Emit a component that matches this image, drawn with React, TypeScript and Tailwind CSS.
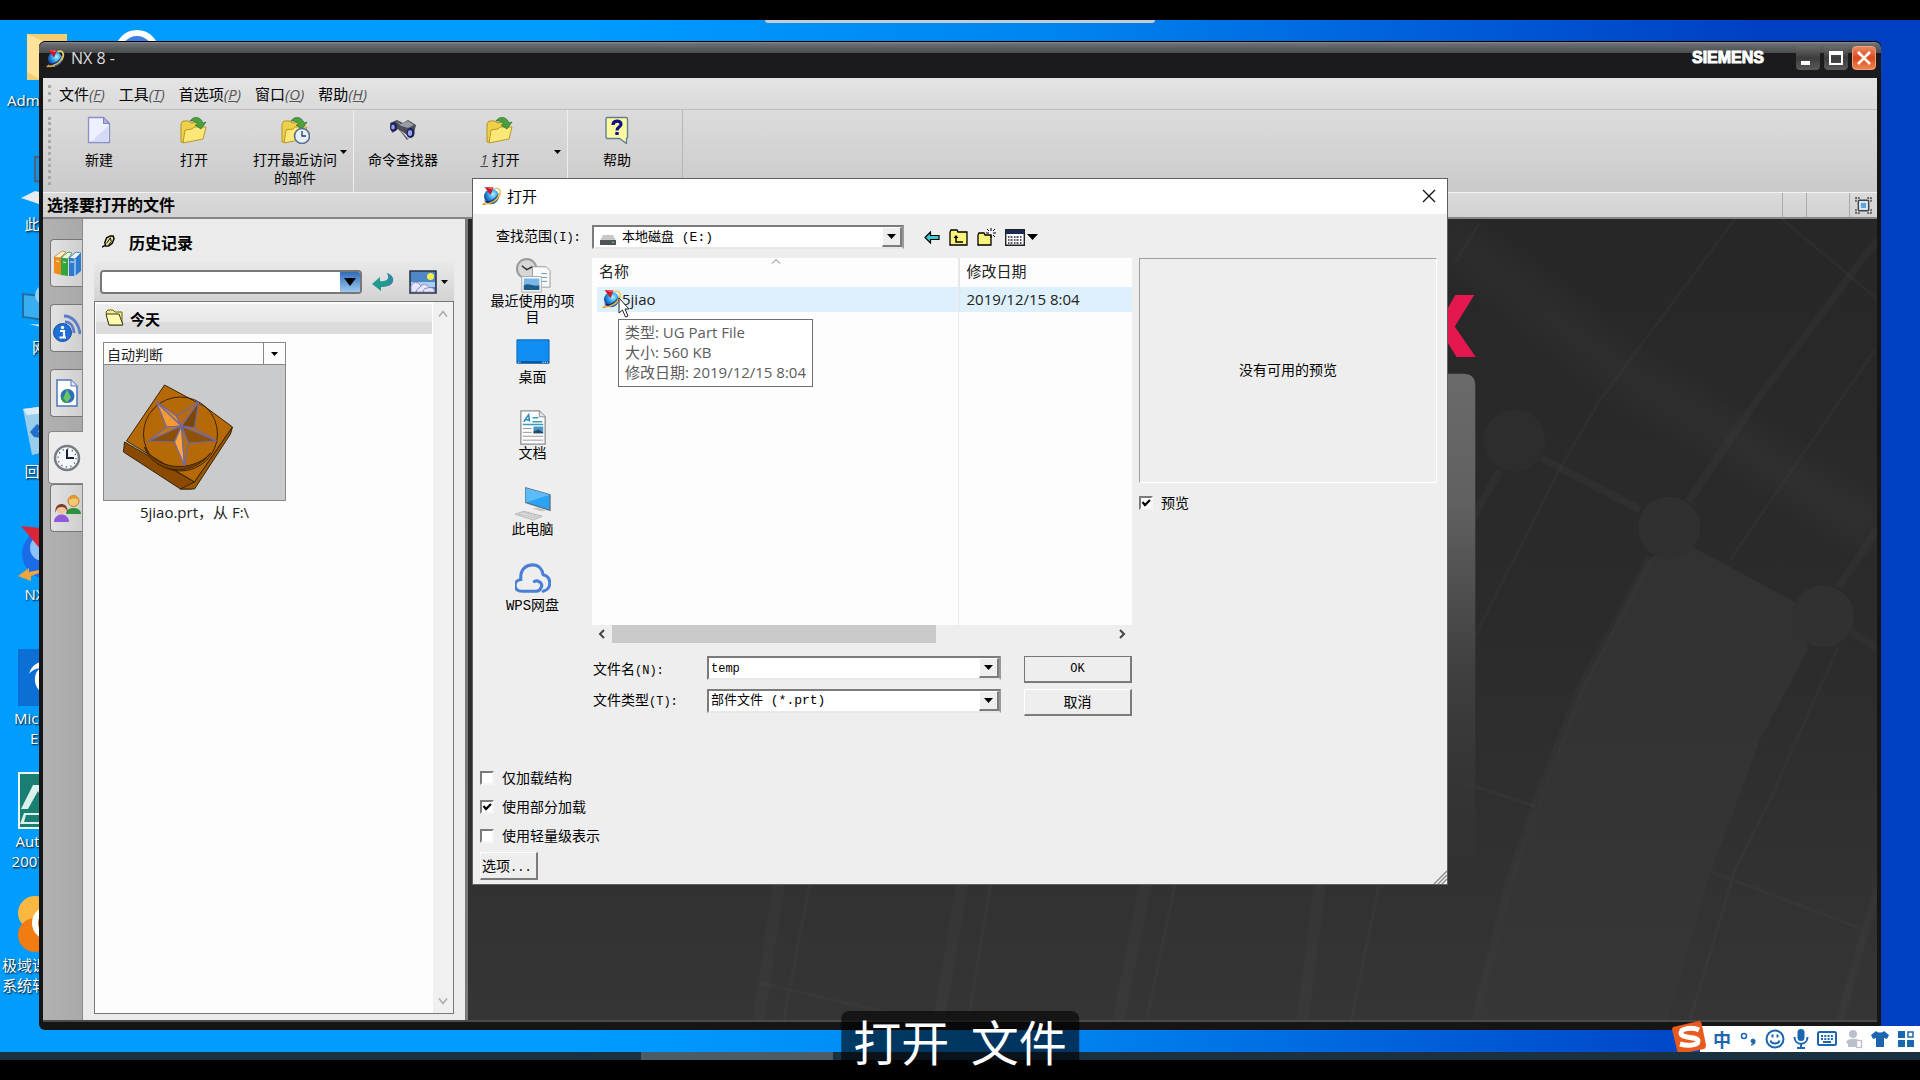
import type { ReactNode } from "react";

const yahei = "font-['Open_Sans','Noto_Sans_CJK_SC',sans-serif]";
const simsun = "font-['Noto_Sans_CJK_SC',sans-serif]";
const mono = "font-['Liberation_Mono','Noto_Sans_CJK_SC',monospace]";

/* ---------- icons ---------- */

const NxLogo = ({ className = "" }: { className?: string }) => (
  <svg viewBox="0 0 20 20" className={className} aria-hidden="true">
    <defs>
      <radialGradient id="nxGlobe" cx="0.6" cy="0.35" r="0.7">
        <stop offset="0" stopColor="#b8f2ff" />
        <stop offset="0.45" stopColor="#2ea3ea" />
        <stop offset="1" stopColor="#0b2f8e" />
      </radialGradient>
    </defs>
    <path d="M12 3c5-2 7 1 6 5-1 5-6 9-11 10" fill="none" stroke="#e9cf6b" strokeWidth="1.800" />
    <circle cx="9.500" cy="10.500" r="7.500" fill="url(#nxGlobe)" />
    <path d="M2 14c4 3 11 0 14-6-1 7-7 11-12 9z" fill="#10235e" opacity=".8" />
    <path d="M1 18.500c7 0 15-4 16.500-11" fill="none" stroke="#e8b64a" strokeWidth="1.500" />
    <path d="M0 19l3-3 .5 3z" fill="#e0952d" />
    <path d="M2.500 1l9 .5-3 7.500z" fill="#c8182c" />
    <path d="M2.500 1l9 .5-2 2z" fill="#ef5a66" />
  </svg>
);

const FolderOpenIcon = ({ clock = false }: { clock?: boolean }) => (
  <svg viewBox="0 0 30 28" className="h-7 w-[30px]" aria-hidden="true">
    <path d="M2 8l2-3h6l2 2 10-1v6L5 26H2z" fill="#efd04a" stroke="#b3922a" />
    <path d="M6 14l7-1 2-2h12l-3 12-20 4z" fill="#fbe877" stroke="#b99828" />
    <path d="M11 5c4-6 11-4 13 2l3-1-5 7-6-4 3-.5c-2-3-5-4-8-3.500z" fill="#4ba03f" stroke="#2b7428" strokeWidth=".7" />
    {clock && (
      <g>
        <circle cx="22" cy="20" r="7.500" fill="#e6eef8" stroke="#57708d" strokeWidth="1.600" />
        <path d="M22 15v5h4" fill="none" stroke="#263c58" strokeWidth="1.300" />
      </g>
    )}
  </svg>
);

const NewFileIcon = () => (
  <svg viewBox="0 0 30 28" className="h-7 w-[30px]" aria-hidden="true">
    <path d="M4.500 1.500h15l6 6v19h-21z" fill="#eef0ff" stroke="#8a8fc4" strokeWidth="1.300" />
    <path d="M19.500 1.500v6h6z" fill="#a9b2e2" stroke="#7c82bd" />
    <path d="M24 10v15H8z" fill="#d4daf8" />
  </svg>
);

const BinocularsIcon = () => (
  <svg viewBox="0 0 30 28" className="h-7 w-[30px]" aria-hidden="true">
    <path d="M2 7l7-3 6 3 5-3 8 5-2 8-7 7-6-8-3-3-6 4z" fill="#4b4d57" />
    <path d="M8 5l5 3 7-3 6 4-6 3-7-2z" fill="#9b9da6" />
    <path d="M12 14l8 9 2-2z" fill="#c9cad0" />
    <ellipse cx="5.500" cy="11" rx="3.500" ry="4.500" fill="#1c1f55" />
    <ellipse cx="5" cy="11" rx="1.800" ry="2.600" fill="#8fa0e8" />
    <ellipse cx="22.500" cy="17" rx="4" ry="5" fill="#1c1f55" />
    <ellipse cx="22" cy="17" rx="2.200" ry="3" fill="#93a5ee" />
  </svg>
);

const HelpIcon = () => (
  <svg viewBox="0 0 30 28" className="h-7 w-[30px]" aria-hidden="true">
    <path d="M5 1.500h19q1.500 0 1.500 1.500v18q0 1.500-1 1.500v5l-7-5H5q-1-.5-1-1.500V3q0-1.500 1-1.500z" fill="#fdfb9e" stroke="#5f7f96" strokeWidth="1.400" />
    <path d="M11 9c0-5 8-5 8-.8 0 3-4 2.800-4 6.300" fill="none" stroke="#10108a" strokeWidth="3.200" />
    <rect x="13.300" y="16" width="3.400" height="3" fill="#10108a" />
  </svg>
);

const ClockFace = ({ className = "" }: { className?: string }) => (
  <svg viewBox="0 0 28 28" className={className} aria-hidden="true">
    <circle cx="14" cy="14" r="12" fill="#f6f8fb" stroke="#767d86" strokeWidth="2.500" />
    <circle cx="14" cy="14" r="9" fill="none" stroke="#56616d" strokeWidth="1.500" strokeDasharray="1.200 3.512" />
    <path d="M14 5.500V14h7" fill="none" stroke="#16243a" strokeWidth="2" />
  </svg>
);

const BooksIcon = () => (
  <svg viewBox="0 0 28 28" className="size-7" aria-hidden="true">
    <path d="M1 8l8-6 4 1-5 6v17l-7-2z" fill="#f08c1c" />
    <path d="M1 8l8-6 4 1-6 6z" fill="#fff2d8" stroke="#c46d10" strokeWidth=".6" />
    <path d="M8 9l7-6 4 1-4 6v17l-7-1z" fill="#34a53c" />
    <path d="M8 9l7-6 4 1-4 6z" fill="#effbe9" stroke="#217a2a" strokeWidth=".6" />
    <path d="M16 9l7-6 5 1v18l-6 5h-6z" fill="#2c7bd0" />
    <path d="M16 9l7-6 5 1-6 6z" fill="#e8f3ff" stroke="#1d5a9e" strokeWidth=".6" />
    <path d="M22 10v17M3 12l3 .5M10 13l3 .5M17 13h4" stroke="#fff" strokeWidth=".9" />
  </svg>
);

const InfoIcon = () => (
  <svg viewBox="0 0 28 28" className="size-7" aria-hidden="true">
    <path d="M11 2c9 0 15 8 16 18M12 8c6 0 9 5 9 11" fill="none" stroke="#5b7cc6" strokeWidth="2.800" />
    <circle cx="9.500" cy="18.500" r="9" fill="#1f6fd6" stroke="#154b9c" />
    <circle cx="9.500" cy="13.500" r="1.700" fill="#fff" />
    <path d="M7 17h4v6.500M6.500 23.500h6.500" fill="none" stroke="#fff" strokeWidth="2.200" />
  </svg>
);

const WebPageIcon = () => (
  <svg viewBox="0 0 28 28" className="size-7" aria-hidden="true">
    <path d="M4 1h14l6 6v20H4z" fill="#fff" stroke="#4f76b8" strokeWidth="1.500" />
    <path d="M18 1v6h6" fill="#dbe6f7" stroke="#4f76b8" />
    <circle cx="14.500" cy="17" r="7" fill="#2b6fb5" />
    <path d="M14 10.500l4 8-4 5-4-4z" fill="#6cc46a" />
    <path d="M8 18c3 1 4 3 5 6-3 0-5-3-5-6z" fill="#2f9a44" />
  </svg>
);

const PeopleIcon = () => (
  <svg viewBox="0 0 28 28" className="size-7" aria-hidden="true">
    <path d="M13 20c0-8 15-8 15 0z" fill="#2e9338" />
    <circle cx="20.500" cy="7" r="5.500" fill="#f6c873" stroke="#c07b20" />
    <path d="M15 6c1-6 10-6 11 0-3-2-7-2-11 0z" fill="#e39a2e" />
    <path d="M1 28c0-10 15-10 15 0z" fill="#8f5bd8" />
    <circle cx="8.500" cy="15" r="5" fill="#f4c49a" />
    <path d="M2.500 19c-2-12 14-12 12 0-1-4-2-6-6-6s-5 2-6 6z" fill="#7d3f2c" />
  </svg>
);

const PinIcon = () => (
  <svg viewBox="0 0 14 14" className="size-[13px]" aria-hidden="true">
    <path d="M0 13l4-2" stroke="#000" strokeWidth="1.500" />
    <path d="M3 8l2-5 4-2h3l1 3-2 5-4 3H4z" fill="#eadf9a" stroke="#000" strokeWidth="1.500" />
    <path d="M5 9l4-6 1 4-3 4" fill="none" stroke="#000" />
  </svg>
);

const PartThumbnail = () => (
  <svg viewBox="0 0 180 135" className="block h-[135px] w-full" aria-hidden="true">
    <g stroke="#3c2400" strokeWidth="1">
      <path d="M60 20L101 42 109 48 128 62 90 117 22 76 24 73z" fill="#b56a07" />
      <path d="M20 77L90 117 87 124 76 124 19 87z" fill="#8a4a02" />
      <path d="M90 117L128 62 126 69 90 124 76 124z" fill="#9a5804" />
      <circle cx="76" cy="69" r="37" fill="none" />
      <path d="M40 82c8 26 48 32 66 6-12 16-50 22-66-6z" fill="#7a4200" />
    </g>
    <g stroke="#7268a0" strokeWidth="1.200">
      <path d="M52 37L77 61 62 62z" fill="#f39a35" />
      <path d="M52 37L72 51 77 61z" fill="#e88c28" />
      <path d="M94 37L77 61 90 63z" fill="#7c4606" />
      <path d="M94 37L77 61 72 51z" fill="#b76a10" />
      <path d="M44 76L77 61 62 62z" fill="#c67716" />
      <path d="M44 76L77 61 70 77z" fill="#8b5008" />
      <path d="M112 76L77 61 90 63z" fill="#b76a10" />
      <path d="M112 76L77 61 84 78z" fill="#8d5208" />
      <path d="M80 101L77 61 70 77z" fill="#ffa640" />
      <path d="M80 101L77 61 84 78z" fill="#b86c12" />
    </g>
  </svg>
);

/* ---------- desktop ---------- */

const desktopItems: { label: string; align?: string; icon: ReactNode }[] = [
  {
    label: "Adm",
    align: "pl-[7px] text-left",
    icon: (
      <>
        <path d="M6 2h40v46H6z" fill="#f3cd73" />
        <path d="M6 2l18 8v40L6 40z" fill="#ffe39b" />
      </>
    ),
  },
  {
    label: "此电脑",
    icon: (
      <>
        <path d="M14 1h38v28l-38-4z" fill="#1590e8" stroke="#4a6377" strokeWidth="2" />
        <path d="M0 42l14-7 24 6-14 9z" fill="#e6ebef" />
      </>
    ),
  },
  {
    label: "网络",
    icon: (
      <>
        <path d="M2 15l36 4v24L2 38z" fill="#37aef0" stroke="#226f9f" strokeWidth="2" />
        <circle cx="24" cy="16" r="10" fill="#8fd0f5" />
        <path d="M8 45l20 1v4z" fill="#dbe7ef" />
      </>
    ),
  },
  {
    label: "回收站",
    icon: (
      <>
        <path d="M2 6l46-6-5 44-32 8z" fill="#a9d3ea" opacity=".9" />
        <path d="M2 6l46-6-4 8-38 4z" fill="#dcecf4" />
        <path d="M9 29l7-8 6 4-5 3 4 7-8-1z" fill="#1f70c9" />
      </>
    ),
  },
  {
    label: "NX 8.0",
    icon: (
      <>
        <circle cx="26" cy="28" r="25" fill="#1b6ce8" />
        <circle cx="22" cy="22" r="13" fill="#8dc3fb" />
        <path d="M0 0l40 4-20 20z" fill="#d9263b" />
        <path d="M-3 50l11-8v4l30-6-28 10v5z" fill="#f3a43a" />
      </>
    ),
  },
  {
    label: "Microsoft Edge",
    icon: (
      <>
        <path d="M-3-1h58v57H-3z" fill="#0b6fd6" />
        <path d="M8 24c4-18 34-18 36 6H20c2 12 16 12 22 7-8 14-30 8-28-10 1-5 3-8 7-9-5 0-10 2-13 6z" fill="#fff" />
      </>
    ),
  },
  {
    label: "AutoCAD 2007 - Si...",
    icon: (
      <>
        <path d="M-3-1h58v57H-3z" fill="#e9f6f2" />
        <path d="M-1 1h54v53H-1z" fill="#1b7e73" />
        <path d="M0 36L12 12h10l12 24h-8L17 18 7 36zM-1 51l4-11h28l4 11z" fill="#d9f3ec" />
        <path d="M3 49l2-7h24l3 7z" fill="#1b7e73" />
      </>
    ),
  },
  {
    label: "极域课堂管理系统软件V6.0",
    icon: (
      <>
        <circle cx="14" cy="16" r="17" fill="#fbb840" />
        <circle cx="14" cy="38" r="17" fill="#f07c12" />
        <circle cx="38" cy="26" r="20" fill="#f79a20" />
        <circle cx="28" cy="26" r="14" fill="none" stroke="#fff" strokeWidth="6" />
      </>
    ),
  },
];

const DesktopIcons = () => (
  <ul className="absolute left-0 top-3 grid h-[988px] w-[94px] grid-rows-8">
    {desktopItems.map((item) => (
      <li key={item.label} className="flex flex-col items-center">
        <svg viewBox="0 0 52 52" className="size-[52px] shrink-0 overflow-visible" aria-hidden="true">
          {item.icon}
        </svg>
        <span
          className={`mt-[6px] w-full text-[15px] leading-5 text-white [text-shadow:1px_1px_2px_#000] ${item.align ?? "text-center"} ${yahei}`}
        >
          {item.label}
        </span>
      </li>
    ))}
  </ul>
);

const ImeBar = () => (
  <div className="absolute bottom-2 right-0 flex h-[26px] w-[220px] items-center justify-between bg-white pl-[13px] pr-[5px] text-[#1c66b0]">
    <svg viewBox="0 0 34 34" className="absolute -left-7 -top-[5px] size-[34px]" aria-hidden="true">
      <path d="M1 6L27 0q2 0 2.500 2L34 24q0 3-2 4L8 33q-2 0-2.500-2L0 8z" fill="#e95a1f" />
      <path d="M27 9c-6-3-18-2-18 3 0 6 17 3 17 8 0 5-11 5-18 3" fill="none" stroke="#fff" strokeWidth="5" />
    </svg>
    <span className="text-lg font-bold leading-none font-['Noto_Sans_CJK_SC',sans-serif]">中</span>
    <svg viewBox="0 0 18 18" className="size-[18px]" aria-hidden="true">
      <circle cx="5" cy="6" r="2.500" fill="none" stroke="currentColor" strokeWidth="1.500" />
      <path d="M14 9a2.500 2.500 0 012 3c0 2-2 3-4 3 1-.5 2-1 2-2a2 2 0 010-4z" fill="currentColor" stroke="currentColor" />
    </svg>
    <svg viewBox="0 0 20 20" className="size-5" fill="none" stroke="currentColor" strokeWidth="2" aria-hidden="true">
      <circle cx="10" cy="10" r="8.500" />
      <path d="M7.500 5.500v3M12.500 5.500v3M5.500 11.500c1 4 8 4 9 0" />
    </svg>
    <svg viewBox="0 0 16 20" className="h-5 w-4" aria-hidden="true">
      <rect x="4.500" y="0" width="7" height="12" rx="3.500" fill="currentColor" />
      <path d="M1.500 8c0 9 13 9 13 0M8 14v4M4 19h8" fill="none" stroke="currentColor" strokeWidth="2" />
    </svg>
    <svg viewBox="0 0 20 16" className="h-4 w-5" aria-hidden="true">
      <rect x="1" y="1" width="18" height="13" rx="1.500" fill="none" stroke="currentColor" strokeWidth="2" />
      <path d="M4 5h12M4 8h12" stroke="currentColor" strokeWidth="2" strokeDasharray="2 1.300" />
      <path d="M6 11h8" stroke="currentColor" strokeWidth="2" />
    </svg>
    <svg viewBox="0 0 18 20" className="h-5 w-[18px] text-[#b9c0cc]" aria-hidden="true">
      <circle cx="8" cy="5" r="4" fill="currentColor" />
      <path d="M1 13c2-4 12-4 13-1v6H3v-3z" fill="currentColor" />
      <rect x="11.500" y="11.500" width="5" height="7" fill="#fff" stroke="currentColor" strokeWidth="1.300" />
    </svg>
    <svg viewBox="0 0 18 18" className="size-[18px]" aria-hidden="true">
      <path d="M5 1c2 2 6 2 8 0l5 4-2 4-3-1v9H5V8L2 9 0 5z" fill="currentColor" />
    </svg>
    <svg viewBox="0 0 18 18" className="size-[18px]" fill="currentColor" aria-hidden="true">
      <path d="M1 1h7v7H1zM1 10h7v7H1zM10 10h7v7h-7z" />
      <path d="M11 2h5v5h-5z" fill="none" stroke="currentColor" strokeWidth="1.500" />
    </svg>
  </div>
);

/* ---------- NX window ---------- */

const TitleBar = () => (
  <header className="flex h-9 shrink-0 items-center rounded-t-md bg-[linear-gradient(#8b8e90_0,#6a6d6f_2px,#4a4d4f_11px,#1b1b1d_11px,#1b1b1d_100%)] pb-1 pl-[7px] pr-[5px]">
    <NxLogo className="size-[19px]" />
    <h1 className={`ml-[6px] text-base leading-5 text-[#dcdcdc] ${yahei}`}>NX 8 -</h1>
    <span className="ml-auto mr-8 text-base font-bold leading-5 text-white font-['Liberation_Sans',sans-serif] [-webkit-text-stroke:1px_#fff]">
      SIEMENS
    </span>
    <div className="flex gap-1">
      <button aria-label="最小化" className="flex size-6 items-end rounded bg-linear-to-b from-[#6b6b6b] via-[#3c3c3c] to-[#5a5a5a] p-[5px]">
        <span className="h-1 w-[9px] bg-white" />
      </button>
      <button aria-label="最大化" className="grid size-6 place-items-center rounded bg-linear-to-b from-[#6b6b6b] via-[#3c3c3c] to-[#5a5a5a]">
        <span className="h-[14px] w-[14px] border-2 border-t-4 border-white" />
      </button>
      <button aria-label="关闭" className="grid size-6 place-items-center rounded border border-[#f0a080] bg-linear-to-b from-[#e88a60] via-[#d9491a] to-[#ee8550]">
        <svg viewBox="0 0 14 14" className="size-[14px]" aria-hidden="true">
          <path d="M1 1l12 12M13 1L1 13" stroke="#fff" strokeWidth="2.500" />
        </svg>
      </button>
    </div>
  </header>
);

const Grip = () => (
  <span className="my-[7px] ml-[5px] w-1 shrink-0 border-l-[3px] border-dotted border-[#a9a9a9]" />
);

const menus = [
  { name: "文件", key: "F" },
  { name: "工具", key: "T" },
  { name: "首选项", key: "P" },
  { name: "窗口", key: "O" },
  { name: "帮助", key: "H" },
];

const MenuBar = () => (
  <nav className={`flex h-8 shrink-0 border-b border-[#bdbdbd] bg-linear-to-b from-[#e4e4e4] to-[#dadada] text-[15px] text-black ${yahei}`}>
    <Grip />
    <div className="flex items-center gap-[14px] pl-[7px]">
      {menus.map((m) => (
        <button key={m.key} className="leading-5">
          {m.name}
          <i className="text-[#555]">
            (<u>{m.key}</u>)
          </i>
        </button>
      ))}
    </div>
  </nav>
);

const DownArrow = ({ className = "" }: { className?: string }) => (
  <svg viewBox="0 0 7 4" className={`h-1 w-[7px] ${className}`} aria-hidden="true">
    <path d="M0 0h7L3.500 4z" fill="#000" />
  </svg>
);

const ToolButton = ({ icon, children, className = "w-24" }: { icon: ReactNode; children: ReactNode; className?: string }) => (
  <button className={`flex flex-col items-center pt-[6px] leading-[18px] ${className}`}>
    {icon}
    <span className="mt-[7px]">{children}</span>
  </button>
);

const ToolBar = () => (
  <div className={`flex h-[82px] shrink-0 bg-linear-to-b from-[#dcdcdc] to-[#cacaca] text-sm text-black ${yahei}`}>
    <Grip />
    <div className="flex border-r border-[#eee]">
      <ToolButton icon={<NewFileIcon />} className="w-[94px]">新建</ToolButton>
      <ToolButton icon={<FolderOpenIcon />}>打开</ToolButton>
      <ToolButton icon={<FolderOpenIcon clock />} className="w-[98px] pl-2">
        打开最近访问
        <br />
        的部件
      </ToolButton>
      <DownArrow className="mr-[6px] mt-10" />
    </div>
    <div className="flex border-r border-[#eee]">
      <ToolButton icon={<BinocularsIcon />} className="w-[98px]">命令查找器</ToolButton>
      <ToolButton icon={<FolderOpenIcon />}>
        <i className="text-[#444] underline">1</i> 打开
      </ToolButton>
      <DownArrow className="mx-[6px] mt-10" />
    </div>
    <div className="flex w-[115px] border-r border-[#b5b5b5]">
      <ToolButton icon={<HelpIcon />} className="w-[98px]">帮助</ToolButton>
    </div>
  </div>
);

const CueLine = () => (
  <div className={`flex h-[27px] shrink-0 items-center border-b-2 border-t border-b-[#858585] border-t-[#f2f2f2] bg-linear-to-b from-[#dadada] to-[#d2d2d2] pl-1 text-base font-bold text-black ${simsun}`}>
    <p className="pb-[2px] leading-5">选择要打开的文件</p>
    <div className="ml-auto flex h-full">
      <span className="w-6 border-l border-[#aaa]" />
      <span className="w-[43px] border-l border-[#aaa]" />
      <button aria-label="全屏" className="grid w-7 place-items-center border-l border-[#aaa]">
        <svg viewBox="0 0 18 18" className="size-[17px]" fill="none" stroke="#444" strokeWidth="1.500" aria-hidden="true">
          <path d="M1 5V1h4M13 1h4v4M17 13v4h-4M5 17H1v-4" strokeDasharray="2 1" />
          <rect x="3.500" y="3.500" width="11" height="11" rx="1" />
          <path d="M5.500 5.500h7v7h-7z" fill="#5da5e0" stroke="#d9ecfb" />
        </svg>
      </button>
    </div>
  </div>
);

const ResourceTab = ({ label, className = "", children }: { label: string; className?: string; children: ReactNode }) => (
  <button
    aria-label={label}
    className={`ml-auto flex h-12 w-8 items-center rounded-l border border-r-0 border-[#777] bg-linear-to-r from-[#e2e2e2] to-[#cfcfcf] pl-[2px] ${className}`}
  >
    {children}
  </button>
);

const ResourceBar = () => (
  <div className="flex w-10 shrink-0 flex-col border-r border-[#8a8a8a] bg-linear-to-r from-[#b2b2b2] to-[#a9a9a9] pt-5">
    <ResourceTab label="重用库"><BooksIcon /></ResourceTab>
    <ResourceTab label="HD3D 工具" className="mt-[17px]"><InfoIcon /></ResourceTab>
    <ResourceTab label="浏览器" className="mt-[17px]"><WebPageIcon /></ResourceTab>
    <button aria-label="历史记录" className="-mr-px ml-auto mt-[14px] flex h-[53px] w-[35px] items-center rounded-l border border-r-0 border-[#888] bg-[#ececec] pl-1">
      <ClockFace className="size-7" />
    </button>
    <ResourceTab label="角色"><PeopleIcon /></ResourceTab>
  </div>
);

const ScrollChevron = ({ down = false }: { down?: boolean }) => (
  <svg viewBox="0 0 10 8" className={`h-2 w-[10px] ${down ? "rotate-180" : ""}`} aria-hidden="true">
    <path d="M1 6.500l4-5 4 5" fill="none" stroke="#aaa" strokeWidth="1.500" />
  </svg>
);

const HistoryPanel = () => (
  <aside className="flex w-[385px] shrink-0 flex-col border-r-[3px] border-[#7a7a7a] bg-[#ebebeb] px-[11px] pb-[6px]">
    <div className="flex h-[43px] items-center gap-[14px] pl-2 pt-[2px]">
      <PinIcon />
      <h2 className={`text-base font-bold text-black ${simsun}`}>历史记录</h2>
    </div>
    <div className="flex h-[39px] items-center bg-linear-to-b from-[#e9e9e9] to-[#d3d3d3] pl-[6px]">
      <div className="flex h-6 w-[262px] overflow-hidden rounded border-2 border-[#777] bg-white">
        <input aria-label="查找" className="min-w-0 flex-1 bg-white px-1 text-sm outline-none" />
        <button aria-label="展开" className="grid w-5 place-items-center bg-linear-to-b from-[#2f6db8] to-[#9dc8f0]">
          <svg viewBox="0 0 12 8" className="h-2 w-3" aria-hidden="true">
            <path d="M0 0h12L6 8z" fill="#000" />
          </svg>
        </button>
      </div>
      <button aria-label="返回" className="ml-[10px]">
        <svg viewBox="0 0 23 20" className="block h-5 w-[23px]" aria-hidden="true">
          <path d="M15 1c10 3 8 15-6 14v4L0 12l8-7v4c7 1 10-2 7-8z" fill="#229a90" />
          <path d="M15 1c8 3 8 12-1 13 5-3 5-8 1-13z" fill="#3f7fa8" />
        </svg>
      </button>
      <button aria-label="视图" className="ml-[14px] flex items-center gap-1">
        <svg viewBox="0 0 28 24" className="h-6 w-7" aria-hidden="true">
          <rect x="1" y="1" width="26" height="22" fill="#4f86c6" stroke="#27303e" strokeWidth="1.500" />
          <path d="M2 12h24v5H2z" fill="#a9cdef" />
          <circle cx="21.500" cy="6.500" r="3.500" fill="#f6ee4e" />
          <path d="M2 22v-6c4-7 9-2 10 0 3-3 7-1 8 2 3-1 5 0 6 4z" fill="#e9e6fa" stroke="#8480b8" strokeWidth=".8" />
          <path d="M7 22c0-3 4-4 5-6M14 22c0-3 3-4 5-4" fill="none" stroke="#8480b8" />
        </svg>
        <DownArrow />
      </button>
    </div>
    <div className="flex flex-1 border border-[#777] bg-[#fdfdfd]">
      <section className="flex-1 pt-[2px]">
        <h3 className={`mx-px flex h-[30px] items-center gap-[5px] bg-[linear-gradient(#f0f0f0_0,#e8e8e8_60%,#dcdcdc_60%,#dcdcdc_100%)] pl-[9px] text-[15px] font-bold text-black ${simsun}`}>
          <svg viewBox="0 0 20 17" className="-mt-1 h-[17px] w-5" aria-hidden="true">
            <path d="M1 3l2-2h5l2 2h7v13H4z" fill="#f4ef8e" stroke="#6a6400" />
            <path d="M1 5h13l4 11H4z" fill="#fffcae" stroke="#333" />
          </svg>
          今天
        </h3>
        <figure className="ml-2 mt-2 w-[183px]">
          <div className="flex h-[22px] border border-b-0 border-[#888] bg-[#fdfdfd]">
            <select aria-label="应用模块" className={`flex-1 appearance-none pl-[3px] text-sm leading-5 text-[#222] ${simsun}`}>
              <option>自动判断</option>
            </select>
            <span className="pointer-events-none grid w-[22px] place-items-center border-l border-[#888]">
              <DownArrow />
            </span>
          </div>
          <div className="border border-[#888] bg-[#c9cbcc]">
            <PartThumbnail />
          </div>
          <figcaption className={`mt-px text-center text-[15px] leading-5 text-[#222] ${yahei}`}>5jiao.prt，从 F:\</figcaption>
        </figure>
      </section>
      <div className="flex w-5 flex-col items-center justify-between bg-[#f0f0f0] py-2">
        <ScrollChevron />
        <ScrollChevron down />
      </div>
    </div>
  </aside>
);

const Backdrop = () => (
  <svg viewBox="467 219 1410 802" preserveAspectRatio="none" className="absolute inset-0 size-full" aria-hidden="true">
    <defs>
      <linearGradient id="bg" x1="0" y1="0" x2="0" y2="1">
        <stop offset="0" stopColor="#272727" />
        <stop offset="0.5" stopColor="#2b2b2b" />
        <stop offset="1" stopColor="#353535" />
      </linearGradient>
      <linearGradient id="pane" x1="0" y1="0" x2="0" y2="1">
        <stop offset="0" stopColor="#6a6a6a" />
        <stop offset="0.250" stopColor="#606060" />
        <stop offset="0.550" stopColor="#414141" />
        <stop offset="1" stopColor="#353535" stopOpacity="0" />
      </linearGradient>
      <filter id="soft"><feGaussianBlur stdDeviation="10" /></filter>
    </defs>
    <path d="M467 219h1410v802H467z" fill="url(#bg)" />
    <g fill="none" stroke="#fff" strokeOpacity=".025">
      <path d="M1440 230L1620 370 1877 530" strokeWidth="44" filter="url(#soft)" />
      <path d="M1782 219l95 80M1875 350L1730 560M1558 472L1478 630l-24 60M1838 648L1770 800 1735 870 1690 1021M1712 873l148 56M1450 779l85 28M1735 219L1600 400 1558 472M1480 222l-25 40" strokeWidth="3" />
      <path d="M1877 240L1757 400 1688 502M1540 458l100 52M1877 530l-39 58M1850 632l27 16M1650 558L1580 690 1537 800 1510 880 1475 1021M1877 890l-37 131M1500 470l-40 70" strokeWidth="8" />
      <path d="M778 884L758 1021M962 884l-24 137M1145 884l-27 137M1320 884l-18 137" strokeWidth="12" />
      <path d="M809 884l-26 137M990 884l-22 137M1175 884l-29 137M1379 884l-28 137M760 984l170 40" strokeWidth="3" />
    </g>
    <path d="M1688 545L1800 605 1808 650 1760 740 1710 875 1668 1021H1475L1510 880 1580 690 1650 558z" fill="#383838" fillOpacity=".55" />
    <g fill="#303030">
      <circle cx="1514" cy="441" r="31" fill="#2d2d2d" />
      <circle cx="1669" cy="528" r="31" />
      <circle cx="1823" cy="617" r="31" fill="#313131" />
    </g>
    <path d="M900 374h563q12 0 12 12v510H900z" fill="url(#pane)" />
  </svg>
);

/* ---------- open dialog ---------- */

const places: { label: string; icon: ReactNode }[] = [
  {
    label: "最近使用的项目",
    icon: (
      <>
        <circle cx="12" cy="11" r="10" fill="#d6d6d6" stroke="#999" strokeWidth="2" />
        <path d="M7 8l5 4 6-3" fill="none" stroke="#333" strokeWidth="1.500" />
        <path d="M18 9h14l4 4v17H18z" fill="#fafafa" stroke="#9a9a9a" />
        <path d="M27 16h6M27 20h6M27 24h6" stroke="#5c9db0" />
        <path d="M7 19h20v16H7z" fill="#fff" stroke="#aaa" />
        <path d="M9 21h16v12H9z" fill="#78b7e8" />
        <path d="M9 28c6-3 10 2 16 0v5H9z" fill="#1d5c86" />
      </>
    ),
  },
  {
    label: "桌面",
    icon: (
      <>
        <path d="M2 6h33v24H2z" fill="#0f8df0" stroke="#0668b8" />
        <path d="M2 28h33v2H2z" fill="#0a4f92" />
        <path d="M3 29h3M28 29h6" stroke="#fff" strokeDasharray="1.500 1" />
      </>
    ),
  },
  {
    label: "文档",
    icon: (
      <>
        <path d="M6 1h19l6 6v28H6z" fill="#fcfcfc" stroke="#8e8e8e" strokeWidth="1.300" />
        <path d="M25 1v6h6" fill="#e5e5e5" stroke="#8e8e8e" />
        <path d="M9 12l5-7 1 7M11 10h4" fill="none" stroke="#2b8ac0" strokeWidth="1.600" />
        <path d="M18 8h6M18 12h10M8 15h21" stroke="#3a9cb6" strokeWidth="1.500" />
        <path d="M8 19h9M8 23h9M8 27h21M8 31h21" stroke="#999" />
        <path d="M19 17h10v7H19z" fill="#4a94c8" />
        <path d="M19 22l5-2 5 3v1H19z" fill="#254b60" />
      </>
    ),
  },
  {
    label: "此电脑",
    icon: (
      <>
        <path d="M11 2l25 7v16l-25-8z" fill="#2ba2f3" stroke="#5a6e7c" strokeWidth="1.300" />
        <path d="M11 2l25 7-25 8z" fill="#5cbcf8" />
        <path d="M18 23l9 3 6-1-9-3z" fill="#c6c6c6" />
        <path d="M0 29l9-3 19 5-9 4z" fill="#dcdcdc" stroke="#aaa" strokeWidth=".8" />
        <path d="M4 29l18 4M8 27l17 5" stroke="#b5b5b5" strokeDasharray="2 1" />
      </>
    ),
  },
  {
    label: "WPS网盘",
    icon: (
      <path
        d="M20 20c4-2 9 2 7 6-1 3-3 4-5 4H7C-2 30-2 19 6 18 5 7 12 3 18 3c6 0 10 4 11 10 9 2 9 15 0 17"
        fill="none"
        stroke="#4a7fd8"
        strokeWidth="3.200"
        strokeLinecap="round"
      />
    ),
  },
];

const PlacesBar = () => (
  <ul className={`w-[119px] shrink-0 text-sm leading-4 text-black ${mono}`}>
    {places.map((p) => (
      <li key={p.label} className="h-[76px]">
        <button className="flex w-full flex-col items-center">
          <svg viewBox="0 0 37 37" className="size-9" aria-hidden="true">{p.icon}</svg>
          <span className="w-[90px]">{p.label}</span>
        </button>
      </li>
    ))}
  </ul>
);

const sunken = "border-2 border-b-[#e8e8e8] border-l-[#7b7b7b] border-r-[#9a9a9a] border-t-[#7b7b7b]";
const raised = "border border-b-2 border-r-2 border-b-[#7c7c7c] border-l-white border-r-[#7c7c7c] border-t-white bg-[#eee]";

const Combo = ({ children, className = "" }: { children: ReactNode; className?: string }) => (
  <div className={`flex h-6 items-stretch bg-white ${sunken} ${className}`}>
    {children}
    <span className={`pointer-events-none grid w-5 shrink-0 place-items-center ${raised}`}>
      <svg viewBox="0 0 9 5" className="h-[5px] w-[9px]" aria-hidden="true">
        <path d="M0 0h9L4.500 5z" fill="#000" />
      </svg>
    </span>
  </div>
);

const LookInRow = () => (
  <div className={`flex h-11 items-center pl-[23px] pt-[2px] text-sm text-black ${simsun}`}>
    <label htmlFor="lookin" className="w-24 shrink-0 pb-1 leading-5">
      查找范围<span className={`text-xs ${mono}`}>(I):</span>
    </label>
    <Combo className="w-[312px]">
      <svg viewBox="0 0 16 20" className="ml-[6px] w-4" aria-hidden="true">
        <path d="M3 8h10l3 6H0z" fill="#c8c8c8" />
        <path d="M0 13h16v5H0z" fill="#4e5355" />
        <path d="M12 15.500h2" stroke="#5fd35f" />
      </svg>
      <select id="lookin" className={`ml-[6px] flex-1 appearance-none pt-[2px] text-[13px] text-black ${mono}`}>
        <option>本地磁盘 (E:)</option>
      </select>
    </Combo>
    <div className="ml-5 flex items-center gap-[9px]">
      <button aria-label="后退">
        <svg viewBox="0 0 16 13" className="block h-[13px] w-4" aria-hidden="true">
          <path d="M1 6.500L6.500 1v3.500H15v4H6.500V12z" fill="#3cc8d0" stroke="#000" strokeWidth="1.200" />
        </svg>
      </button>
      <button aria-label="向上一级">
        <svg viewBox="0 0 19 17" className="block h-[17px] w-[19px]" aria-hidden="true">
          <path d="M1 3l1-2h6l1 2h9v13H1z" fill="#fbf47c" stroke="#000" strokeWidth="1.300" />
          <path d="M7 6L4.500 9h5z" fill="#000" />
          <path d="M7 8v5h7" fill="none" stroke="#000" strokeWidth="1.500" />
        </svg>
      </button>
      <button aria-label="新建文件夹">
        <svg viewBox="0 0 19 18" className="block h-[18px] w-[19px]" aria-hidden="true">
          <path d="M1 7l1-2h5l1 2h6v10H1z" fill="#fbf47c" stroke="#000" strokeWidth="1.300" />
          <path d="M14 0v3M14 7v3M10 1l2 2M18 1l-2 2M16 5h3M16 7l2 2M9 5h3" stroke="#000" />
        </svg>
      </button>
      <button aria-label="查看菜单" className="flex items-center gap-[2px]">
        <svg viewBox="0 0 20 17" className="block h-[17px] w-5" aria-hidden="true">
          <path d="M.7.700h18.600v15.600H.7z" fill="#fff" stroke="#222" strokeWidth="1.400" />
          <path d="M1 1h18v4H1z" fill="#1b2a55" />
          <path d="M3 8h14M3 11h14M3 14h14" stroke="#223" strokeWidth="1.500" strokeDasharray="1.500 1 2 1.500" />
        </svg>
        <svg viewBox="0 0 11 6" className="h-[6px] w-[11px]" aria-hidden="true">
          <path d="M0 0h11L5.500 6z" fill="#000" />
        </svg>
      </button>
    </div>
  </div>
);

const FileTooltip = () => (
  <div
    role="tooltip"
    className={`absolute left-[26px] top-[61px] z-10 border border-[#6f6f6f] bg-white px-[6px] pb-1 pt-[2px] text-[15px] leading-5 whitespace-nowrap text-[#5c5c5c] ${yahei}`}
  >
    <p>类型: UG Part File</p>
    <p>大小: 560 KB</p>
    <p>修改日期: 2019/12/15 8:04</p>
  </div>
);

const FileList = () => (
  <div className="relative">
    <div className="h-[367px] bg-[linear-gradient(to_right,#fdfdfd_366px,#e9e9e9_366px,#e9e9e9_367px,#fdfdfd_367px)]">
      <table className={`w-full table-fixed border-collapse text-left text-[15px] leading-5 text-[#222] ${yahei}`}>
        <thead>
          <tr className="h-[29px]">
            <th className="w-[367px] border-r border-[#e5e5e5] pb-[3px] pl-[7px] font-normal">名称</th>
            <th className="pb-[3px] pl-[7px] font-normal">修改日期</th>
          </tr>
        </thead>
        <tbody>
          <tr className="h-[25px] bg-linear-to-r from-white from-[5px] to-[#def0fb] to-[5px]">
            <td className="border-r border-[#e5e5e5] pb-[2px] pl-[10px]">
              <span className="flex items-center">
                <NxLogo className="size-5" />
                5jiao
              </span>
            </td>
            <td className="pb-[2px] pl-[7px]">2019/12/15 8:04</td>
          </tr>
        </tbody>
      </table>
    </div>
    <div className="flex h-[18px] items-center bg-[#eee]">
      <svg viewBox="0 0 20 18" className="h-[18px] w-5" aria-hidden="true">
        <path d="M12 5L8 9l4 4" fill="none" stroke="#444" strokeWidth="2" />
      </svg>
      <span className="h-full w-3/5 bg-[#cacaca]" />
      <svg viewBox="0 0 20 18" className="ml-auto h-[18px] w-5" aria-hidden="true">
        <path d="M8 5l4 4-4 4" fill="none" stroke="#444" strokeWidth="2" />
      </svg>
    </div>
    <svg viewBox="0 0 10 6" className="absolute left-[179px] top-0 h-[6px] w-[10px]" aria-hidden="true">
      <path d="M1 5.500l4-4 4 4" fill="none" stroke="#777" />
    </svg>
    <FileTooltip />
    <svg viewBox="0 0 12 21" className="absolute left-[26px] top-[39px] z-20 h-[21px] w-3" aria-hidden="true">
      <path d="M1 1v15l3.500-3 3 7 2.500-1-3-7H11z" fill="#fff" stroke="#222" />
    </svg>
  </div>
);

const FileFields = () => (
  <div className={`mt-[13px] grid grid-cols-[115px_294px_108px] items-start gap-y-[6px] text-sm text-black ${simsun}`}>
    <label htmlFor="filename" className="pl-px pt-[2px] leading-5">
      文件名<span className={`text-xs ${mono}`}>(N):</span>
    </label>
    <Combo>
      <input id="filename" defaultValue="temp" className={`min-w-0 flex-1 bg-white pl-[2px] pt-[2px] text-xs text-black outline-none ${mono}`} />
    </Combo>
    <button className={`ml-[23px] h-[27px] w-[108px] text-xs ${raised} ${mono} outline-1 -outline-offset-1 outline-[#777]`}>OK</button>
    <label htmlFor="filetype" className="pl-px leading-5">
      文件类型<span className={`text-xs ${mono}`}>(T):</span>
    </label>
    <Combo>
      <select id="filetype" className={`min-w-0 flex-1 appearance-none pl-[2px] pt-px text-[13px] text-black ${mono}`}>
        <option>部件文件 (*.prt)</option>
      </select>
    </Combo>
    <button className={`ml-[23px] h-[27px] w-[108px] pb-[2px] leading-5 ${raised}`}>取消</button>
  </div>
);

const CheckBox = ({ label, checked = false }: { label: string; checked?: boolean }) => (
  <label className={`flex h-[29px] items-center gap-2 text-sm leading-5 text-black ${simsun}`}>
    <span className="relative size-[14px]">
      <input
        type="checkbox"
        defaultChecked={checked}
        className="peer block size-[14px] appearance-none border-2 border-b-[#f4f4f4] border-l-[#7b7b7b] border-r-[#f4f4f4] border-t-[#7b7b7b] bg-white"
      />
      <svg viewBox="0 0 14 14" className="pointer-events-none absolute inset-0 hidden size-[14px] peer-checked:block" aria-hidden="true">
        <path d="M3.500 6l2.500 3L11 4" fill="none" stroke="#000" strokeWidth="2.200" />
      </svg>
    </span>
    <span className="pb-[2px]">{label}</span>
  </label>
);

const OpenDialog = () => (
  <div
    role="dialog"
    aria-labelledby="dlg-title"
    className="absolute left-[433px] top-[136px] w-[976px] border border-[#5f5f5f] bg-[#eee]"
  >
    <div className="flex h-[35px] items-center bg-white pb-[2px] pl-[9px] pr-[11px]">
      <NxLogo className="size-5" />
      <h2 id="dlg-title" className={`ml-[5px] text-[15px] leading-5 text-black ${yahei}`}>打开</h2>
      <button aria-label="关闭" className="ml-auto">
        <svg viewBox="0 0 14 14" className="block size-[14px]" aria-hidden="true">
          <path d="M1 1l12 12M13 1L1 13" stroke="#111" strokeWidth="1.300" />
        </svg>
      </button>
    </div>
    <LookInRow />
    <div className="flex pr-[10px]">
      <PlacesBar />
      <div className="w-[540px] shrink-0">
        <FileList />
        <FileFields />
      </div>
      <div className="ml-[7px] flex-1">
        <div className={`grid h-[225px] place-items-center border border-b-white border-l-[#a0a0a0] border-r-white border-t-[#a0a0a0] pb-[3px] text-sm text-black ${simsun}`}>
          没有可用的预览
        </div>
        <div className="mt-[5px]">
          <CheckBox label="预览" checked />
        </div>
      </div>
    </div>
    <div className="mt-[47px] flex flex-col items-start pb-1 pl-[7px]">
      <CheckBox label="仅加载结构" />
      <CheckBox label="使用部分加载" checked />
      <CheckBox label="使用轻量级表示" />
      <button className={`mt-[2px] h-7 w-[58px] pl-px text-left text-sm leading-5 text-black ${raised} ${simsun}`}>
        选项<span className={`text-xs ${mono}`}>...</span>
      </button>
    </div>
    <svg viewBox="0 0 14 14" className="absolute bottom-0 right-0 size-[14px]" aria-hidden="true">
      <path d="M1 14L14 1M5 14l9-9M9 14l5-5" stroke="#888" strokeWidth="1.300" />
    </svg>
  </div>
);

const NxWindow = () => (
  <main className="absolute bottom-[30px] left-[39px] right-[39px] top-[21px] flex flex-col rounded-md border-t border-black bg-[#151515]">
    <TitleBar />
    <div className="mx-1 flex flex-1 flex-col">
      <MenuBar />
      <ToolBar />
      <CueLine />
      <div className="flex flex-1">
        <ResourceBar />
        <HistoryPanel />
        <div className="relative flex-1 overflow-hidden bg-[#2b2b2b]">
          <Backdrop />
          <span className="absolute left-[874px] top-[62px] text-[86px] font-extrabold leading-none text-[#e5174f] font-['Open_Sans',sans-serif]">
            NX
          </span>
        </div>
      </div>
    </div>
    <div className="mx-1 h-[10px] border-t-2 border-[#4a4a4a]" />
    <OpenDialog />
  </main>
);

const App = () => (
  <div className="relative flex min-h-screen flex-col overflow-hidden bg-black py-5">
    <div className="relative flex-1 overflow-hidden bg-[linear-gradient(to_right,#009dff_0%,#009cff_30%,#0084f0_55%,#0058d4_78%,#003fc2_92%)]">
      <div className="absolute left-1/2 top-0 h-[3px] w-[390px] -translate-x-1/2 rounded-b bg-[#c3cdd6]" />
      <svg viewBox="0 0 44 44" className="absolute left-[115px] top-[10px] size-11" aria-hidden="true">
        <circle cx="22" cy="22" r="19" fill="#3b7fe0" stroke="#fff" strokeWidth="6" />
      </svg>
      <DesktopIcons />
      <NxWindow />
      <ImeBar />
      <div className="absolute inset-x-0 bottom-0 h-2 bg-[#1b3140]">
        <div className="ml-[641px] h-full w-48 bg-[#4b5c67]" />
      </div>
    </div>
    <p className="absolute bottom-0 left-1/2 flex h-[69px] -translate-x-1/2 items-center rounded-t-lg bg-black/60 px-3 pb-3 text-5xl leading-none whitespace-pre text-white font-['Noto_Sans_CJK_SC',sans-serif]">
      打开  文件
    </p>
  </div>
);

export default App;
